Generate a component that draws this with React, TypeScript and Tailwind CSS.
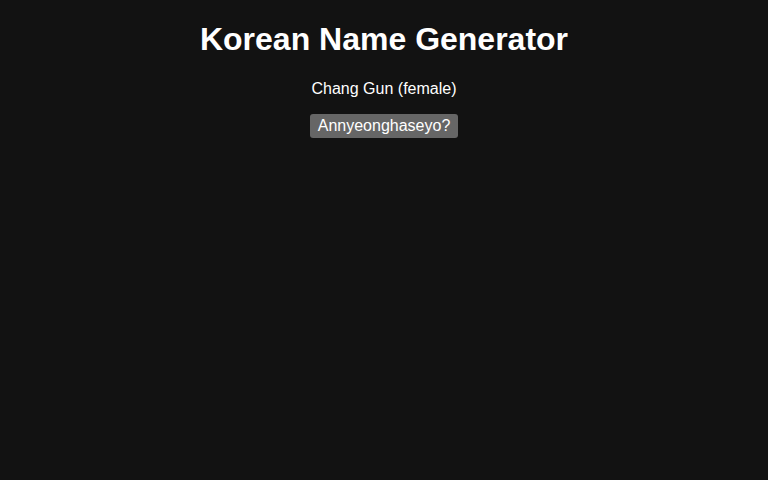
import { useState } from 'react';

const names = ['Chang Gun (female)', 'Kim Min-jun (male)', 'Park Ji-woo (female)', 'Lee Seo-yeon (female)'];

export default function App() {
  const [i, setI] = useState(0);

  return (
    <main className="min-h-screen bg-[#121212] text-center text-white font-['Liberation_Sans',Arial,sans-serif] flow-root">
      <h1 className="my-[21.44px] text-[32px] font-bold leading-[37px]">Korean Name Generator</h1>
      <p className="mt-[21.44px] mb-4 text-base leading-[18.4px]">{names[i]}</p>
      <button
        type="button"
        onClick={() => setI((i + 1) % names.length)}
        className="h-6 rounded-[3px] bg-[#666666] px-2 text-base leading-[18.4px] text-white"
      >
        Annyeonghaseyo?
      </button>
    </main>
  );
}
